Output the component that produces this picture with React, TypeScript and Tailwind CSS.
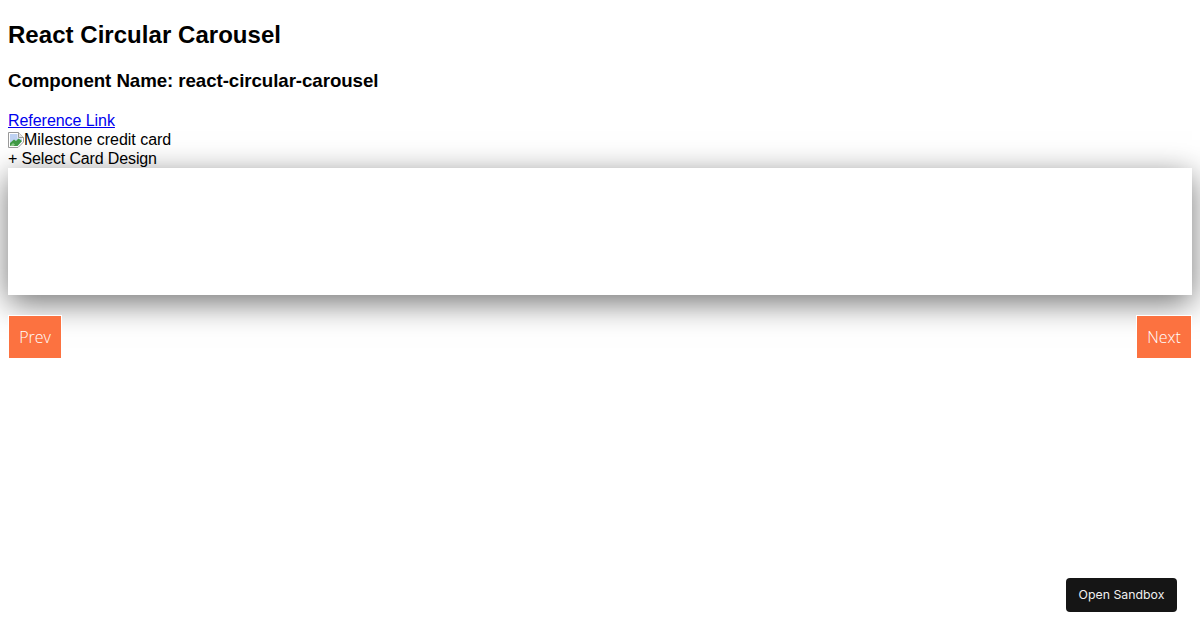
export default function App() {
  return (
    <div className="relative h-[630px] overflow-hidden bg-white px-2 font-['Liberation_Sans',Arial,sans-serif] text-black text-[16px] leading-[normal] flow-root">
      <h2 className="mt-[21px] mb-[19px] text-[24px] font-bold leading-[27px] tracking-[0.04px]">React Circular Carousel</h2>
      <h3 className="mt-[22px] mb-[19px] text-[18.72px] font-bold leading-[21px] tracking-[-0.07px]">Component Name: react-circular-carousel</h3>
      <a href="#" className="block w-fit text-[#0000ee] underline leading-[18px] mt-[21px] tracking-[-0.05px]">Reference Link</a>
      <div className="flex items-end h-[19px] leading-[18px]">
        <svg width="16" height="16" viewBox="0 0 16 16" className="mb-[1px] shrink-0">
          <path d="M0.5 0.5H10.5L15.5 5.5V10L10 15.5H0.5Z" fill="#fff" stroke="#9a9a9a" />
          <path d="M10.5 0.5V5.5H15.5" fill="#e6e6e6" stroke="#9a9a9a" />
          <path d="M2 2H9.5V6.5H14V9.5L9.5 14H2Z" fill="#bfd2f2" />
          <path d="M2 14V11L6 7.5L8 9L10.5 6.5L14 9L9.5 14Z" fill="#3f9a45" />
          <path d="M2 14L5 11L7 12.5L5.5 14Z" fill="#8cc98a" />
        </svg>
        <span className="tracking-[-0.02px]">Milestone credit card</span>
      </div>
      <div className="h-[19px] leading-[19px] flex">
        <span className="w-[13.5px]">+</span>
        <span className="tracking-[-0.14px]">Select Card Design</span>
      </div>
      <div className="relative h-[127px] bg-white shadow-[0_8px_30px_rgba(0,0,0,0.55)]" />
      <div className="relative flex justify-between mt-[20px] font-['Open_Sans',sans-serif]">
        <button className="w-[54px] h-[44px] border border-white bg-[#fc7240] text-white text-[16px] font-light">Prev</button>
        <button className="w-[56px] h-[44px] border border-white bg-[#fc7240] text-white text-[16px] font-light">Next</button>
      </div>
      <button className="absolute left-[1066px] top-[578px] w-[111px] h-[34px] pb-[1px] rounded-[4px] bg-[#151515] text-[#f0f0f0] text-[12.3px] font-['Inter',sans-serif]">Open Sandbox</button>
    </div>
  );
}
